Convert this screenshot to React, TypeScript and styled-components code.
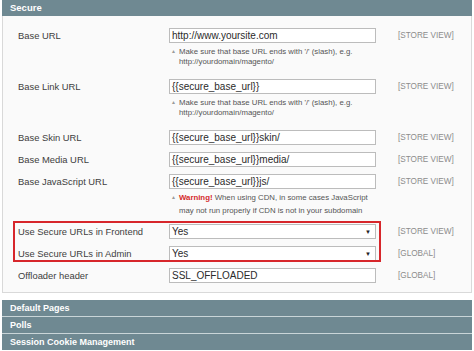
import React, { FC } from 'react';
import styled, { createGlobalStyle } from 'styled-components';

const GlobalStyle = createGlobalStyle`
  body {
    margin: 0;
    background: #ffffff;
    font-family: "Liberation Sans", Arial, sans-serif;
  }
`;

const Page = styled.div`
  width: 470px;
  padding: 0 2px;
`;

const SectionHead = styled.div`
  height: 16px;
  line-height: 16px;
  padding-left: 8px;
  background: #6f8992;
  color: #ffffff;
  font-size: 9.5px;
  font-weight: bold;
`;

const Fieldset = styled.div`
  background: #fafafa;
  border: 1px solid #d9d9d9;
  border-top: none;
  padding: 12px 0 9px 15px;
`;

const Row = styled.div`
  display: flex;
  align-items: flex-start;
  padding-bottom: 7px;

  &:last-child {
    padding-bottom: 0;
  }
`;

const Label = styled.div`
  width: 151px;
  flex-shrink: 0;
  font-size: 9.4px;
  line-height: 15px;
  color: #404040;
`;

const Value = styled.div`
  width: 207px;
  flex-shrink: 0;
`;

const Field = styled.div`
  display: flex;
  align-items: center;
  justify-content: space-between;
  box-sizing: border-box;
  height: 15px;
  padding: 0 4px 0 2px;
  background: #ffffff;
  border: 1px solid #bcbcbc;
  font-size: 10px;
  color: #2b2b2b;
  white-space: nowrap;
  overflow: hidden;
`;

const Arrow = styled.span`
  font-size: 6px;
  color: #222;
`;

const Note = styled.div<{ $loose?: boolean }>`
  padding: ${(p) => (p.$loose ? '2px 0 0 10px' : '3px 0 5px 10px')};
  font-size: 7.8px;
  line-height: ${(p) => (p.$loose ? '13px' : '10px')};
  color: #555;
  white-space: nowrap;
`;

const Bullet = styled.span`
  display: inline-block;
  width: 8px;
  margin-left: -8px;
  font-size: 5px;
  color: #9a9a9a;
  vertical-align: 1px;
`;

const Warn = styled.b`
  color: #d42a2a;
`;

const Scope = styled.div`
  margin-left: 22px;
  font-size: 8.2px;
  line-height: 15px;
  color: #8c8c8c;
`;

const Highlight = styled.div`
  position: relative;
  padding-bottom: 7px;

  &::after {
    content: '';
    position: absolute;
    left: -5px;
    top: -3px;
    bottom: 6px;
    width: 368px;
    box-sizing: border-box;
    border: 2px solid #d7262b;
    pointer-events: none;
  }
`;

const Collapsed = styled.div`
  margin-top: 7px;
`;

const SectionBar = styled(SectionHead)`
  font-size: 9px;

  & + & {
    border-top: 1px solid #c9d5d8;
  }
`;

type Setting = {
  label: string;
  value: string;
  scope: string;
  select?: boolean;
  note?: React.ReactNode;
};

const Item: FC<Setting> = ({ label, value, scope, select, note }) => (
  <Row>
    <Label>{label}</Label>
    <Value>
      <Field>
        <span>{value}</span>
        {select && <Arrow>▼</Arrow>}
      </Field>
      {note}
    </Value>
    <Scope>{scope}</Scope>
  </Row>
);

const slashNote = (
  <Note>
    <Bullet>▲</Bullet>Make sure that base URL ends with '/' (slash), e.g.
    <br />
    http://yourdomain/magento/
  </Note>
);

const cdnNote = (
  <Note $loose>
    <Bullet>▲</Bullet>
    <Warn>Warning!</Warn> When using CDN, in some cases JavaScript
    <br />
    may not run properly if CDN is not in your subdomain
  </Note>
);

export default function App() {
  return (
    <Page>
      <GlobalStyle />
      <SectionHead>Secure</SectionHead>
      <Fieldset>
        <Item label="Base URL" value="http://www.yoursite.com" scope="[STORE VIEW]" note={slashNote} />
        <Item label="Base Link URL" value="{{secure_base_url}}" scope="[STORE VIEW]" note={slashNote} />
        <Item label="Base Skin URL" value="{{secure_base_url}}skin/" scope="[STORE VIEW]" />
        <Item label="Base Media URL" value="{{secure_base_url}}media/" scope="[STORE VIEW]" />
        <Item label="Base JavaScript URL" value="{{secure_base_url}}js/" scope="[STORE VIEW]" note={cdnNote} />
        <Highlight>
          <Item label="Use Secure URLs in Frontend" value="Yes" scope="[STORE VIEW]" select />
          <Item label="Use Secure URLs in Admin" value="Yes" scope="[GLOBAL]" select />
        </Highlight>
        <Item label="Offloader header" value="SSL_OFFLOADED" scope="[GLOBAL]" />
      </Fieldset>
      <Collapsed>
        <SectionBar>Default Pages</SectionBar>
        <SectionBar>Polls</SectionBar>
        <SectionBar>Session Cookie Management</SectionBar>
      </Collapsed>
    </Page>
  );
}
